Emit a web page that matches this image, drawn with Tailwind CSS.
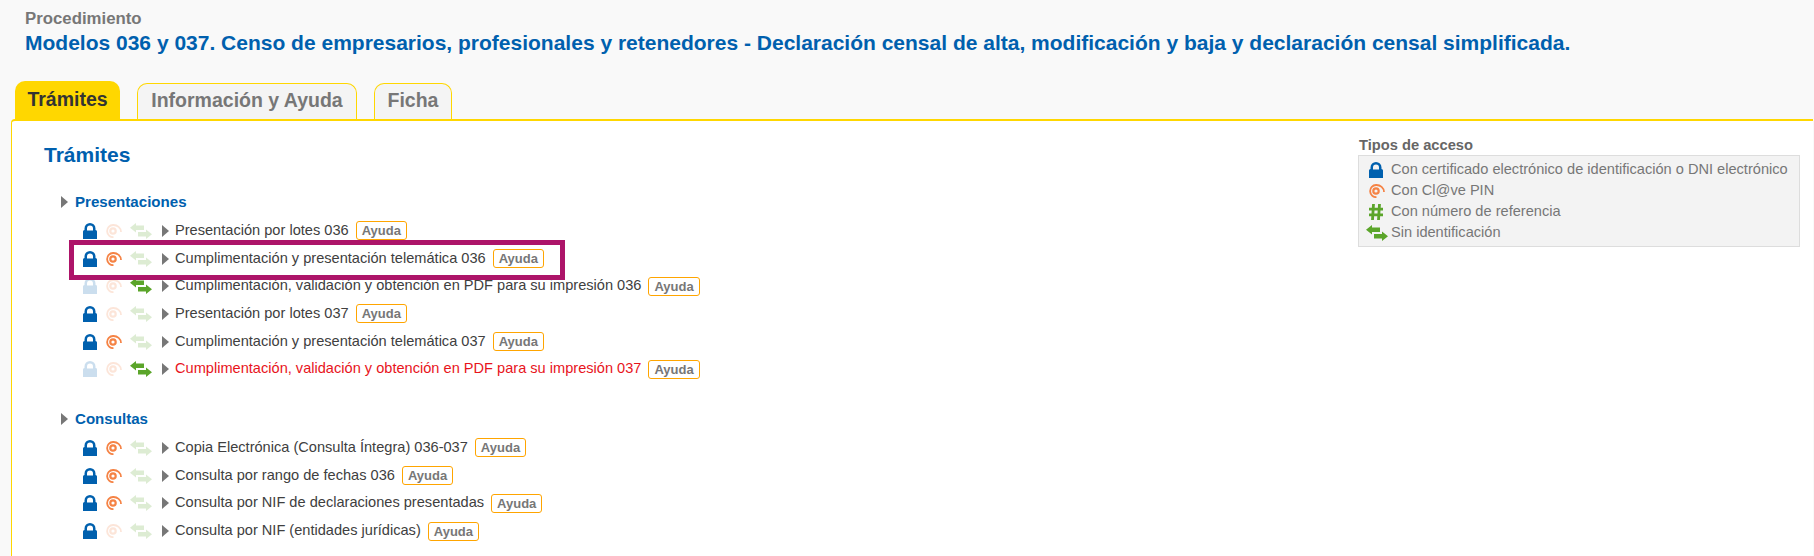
<!DOCTYPE html>
<html lang="es">
  <head>
    <meta charset="UTF-8" />
    <title>Procedimiento</title>
    <script src="https://cdn.jsdelivr.net/npm/@tailwindcss/browser@4"></script>
  </head>
  <body class="h-[556px] overflow-hidden bg-[#f9f9f9] font-['Liberation_Sans',Arial,sans-serif] text-[14.6px] text-[#404040]">
    <!-- icon defs -->
    <svg class="hidden">
      <symbol id="lock" viewBox="0 0 14 16">
        <path fill="#0060ae" fill-rule="evenodd" d="M1.500 7V5.500a5.500 5.500 0 0 1 11 0V7A1.500 1.500 0 0 1 14 8.500V16H0V8.500A1.500 1.500 0 0 1 1.500 7zM4 7.500h6V5.500a3 3 0 0 0-6 0v2z" />
      </symbol>
      <symbol id="clave" viewBox="0 0 17 14">
        <g fill="none" stroke="#f58345">
          <path stroke-width="1.800" d="M16 8A7.500 7 0 0 0 8 1 6.100 6.100 0 0 0 8.500 13.200" />
          <circle cx="8" cy="7" r="2.700" stroke-width="2.200" />
        </g>
      </symbol>
      <symbol id="arrows" viewBox="0 0 22 16">
        <path fill="#5ba52a" d="M0 4.750 6 0v2.500h8V7H6v2.500zM22 11.250 16 6.500V9H8v4.500h8V16z" />
      </symbol>
      <symbol id="hash" viewBox="0 0 14 16">
        <path fill="none" stroke="#5ba52a" stroke-width="2.800" d="M4.500 0 3.500 16M10.500 0 9.500 16M0 5.200h14M0 10.800h14" />
      </symbol>
    </svg>

    <header class="pt-[9px] pl-[25px]">
      <div class="text-[16.800px] leading-[20px] font-bold text-[#777]">Procedimiento</div>
      <h1 class="mt-[2px] text-[21px] leading-[24px] font-bold text-[#0060ae]">
        Modelos 036 y 037. Censo de empresarios, profesionales y retenedores - Declaración censal de alta, modificación y baja y declaración censal simplificada.
      </h1>
    </header>

    <nav class="mt-[26px] flex items-end gap-[17px] pl-[15px] text-[19.500px] font-bold">
      <a class="flex h-[38px] w-[105px] items-center justify-center rounded-t-[10px] bg-[#ffd700] text-[#333]">Trámites</a>
      <a class="flex h-[36px] w-[220px] items-center justify-center rounded-t-[10px] border border-b-0 border-[#ffd700] bg-[#f4f4f4] pb-[2px] text-[#777]">Información y Ayuda</a>
      <a class="flex h-[36px] w-[78px] items-center justify-center rounded-t-[10px] border border-b-0 border-[#ffd700] bg-[#f4f4f4] pb-[2px] text-[#777]">Ficha</a>
    </nav>

    <main class="relative mr-px ml-[11px] flex h-[437px] justify-between rounded-tl-[4px] border-t-2 border-l border-[#ffd700] bg-white pr-[13px] pl-[32px]">
      <div class="pt-[22px]">
        <h2 class="text-[21px] leading-[24px] font-bold text-[#0060ae]">Trámites</h2>

        <section class="mt-[25px] flex h-[20px] items-center">
          <span class="ml-[17px] h-0 w-0 border-y-[6px] border-l-[7px] border-y-transparent border-l-[#777]"></span>
          <h3 class="ml-[7px] text-[15.100px] font-bold text-[#0060ae]">Presentaciones</h3>
        </section>
        <ul class="mt-[5px]">
          <li class="flex h-[27.700px] items-center">
            <svg class="ml-[39px] h-[16px] w-[14px]"><use href="#lock" /></svg>
            <svg class="ml-[8px] h-[14px] w-[17px] opacity-20"><use href="#clave" /></svg>
            <svg class="ml-[8px] h-[16px] w-[22px] opacity-20"><use href="#arrows" /></svg>
            <span class="ml-[10px] h-0 w-0 border-y-[6px] border-l-[7px] border-y-transparent border-l-[#777]"></span>
            <span class="ml-[6px]">Presentación por lotes 036</span>
            <span class="ml-[7px] rounded-[3px] border border-[#ffa500] px-[5px] text-[13px] leading-[17px] font-bold text-[#777]">Ayuda</span>
          </li>
          <li class="flex h-[27.700px] items-center">
            <svg class="ml-[39px] h-[16px] w-[14px]"><use href="#lock" /></svg>
            <svg class="ml-[8px] h-[14px] w-[17px]"><use href="#clave" /></svg>
            <svg class="ml-[8px] h-[16px] w-[22px] opacity-20"><use href="#arrows" /></svg>
            <span class="ml-[10px] h-0 w-0 border-y-[6px] border-l-[7px] border-y-transparent border-l-[#777]"></span>
            <span class="ml-[6px]">Cumplimentación y presentación telemática 036</span>
            <span class="ml-[7px] rounded-[3px] border border-[#ffa500] px-[5px] text-[13px] leading-[17px] font-bold text-[#777]">Ayuda</span>
          </li>
          <li class="flex h-[27.700px] items-center">
            <svg class="ml-[39px] h-[16px] w-[14px] opacity-20"><use href="#lock" /></svg>
            <svg class="ml-[8px] h-[14px] w-[17px] opacity-20"><use href="#clave" /></svg>
            <svg class="ml-[8px] h-[16px] w-[22px]"><use href="#arrows" /></svg>
            <span class="ml-[10px] h-0 w-0 border-y-[6px] border-l-[7px] border-y-transparent border-l-[#777]"></span>
            <span class="ml-[6px]">Cumplimentación, validación y obtención en PDF para su impresión 036</span>
            <span class="ml-[7px] rounded-[3px] border border-[#ffa500] px-[5px] text-[13px] leading-[17px] font-bold text-[#777]">Ayuda</span>
          </li>
          <li class="flex h-[27.700px] items-center">
            <svg class="ml-[39px] h-[16px] w-[14px]"><use href="#lock" /></svg>
            <svg class="ml-[8px] h-[14px] w-[17px] opacity-20"><use href="#clave" /></svg>
            <svg class="ml-[8px] h-[16px] w-[22px] opacity-20"><use href="#arrows" /></svg>
            <span class="ml-[10px] h-0 w-0 border-y-[6px] border-l-[7px] border-y-transparent border-l-[#777]"></span>
            <span class="ml-[6px]">Presentación por lotes 037</span>
            <span class="ml-[7px] rounded-[3px] border border-[#ffa500] px-[5px] text-[13px] leading-[17px] font-bold text-[#777]">Ayuda</span>
          </li>
          <li class="flex h-[27.700px] items-center">
            <svg class="ml-[39px] h-[16px] w-[14px]"><use href="#lock" /></svg>
            <svg class="ml-[8px] h-[14px] w-[17px]"><use href="#clave" /></svg>
            <svg class="ml-[8px] h-[16px] w-[22px] opacity-20"><use href="#arrows" /></svg>
            <span class="ml-[10px] h-0 w-0 border-y-[6px] border-l-[7px] border-y-transparent border-l-[#777]"></span>
            <span class="ml-[6px]">Cumplimentación y presentación telemática 037</span>
            <span class="ml-[7px] rounded-[3px] border border-[#ffa500] px-[5px] text-[13px] leading-[17px] font-bold text-[#777]">Ayuda</span>
          </li>
          <li class="flex h-[27.700px] items-center">
            <svg class="ml-[39px] h-[16px] w-[14px] opacity-20"><use href="#lock" /></svg>
            <svg class="ml-[8px] h-[14px] w-[17px] opacity-20"><use href="#clave" /></svg>
            <svg class="ml-[8px] h-[16px] w-[22px]"><use href="#arrows" /></svg>
            <span class="ml-[10px] h-0 w-0 border-y-[6px] border-l-[7px] border-y-transparent border-l-[#777]"></span>
            <span class="ml-[6px] text-[#e8141c]">Cumplimentación, validación y obtención en PDF para su impresión 037</span>
            <span class="ml-[7px] rounded-[3px] border border-[#ffa500] px-[5px] text-[13px] leading-[17px] font-bold text-[#777]">Ayuda</span>
          </li>
        </ul>

        <section class="mt-[26px] flex h-[20px] items-center">
          <span class="ml-[17px] h-0 w-0 border-y-[6px] border-l-[7px] border-y-transparent border-l-[#777]"></span>
          <h3 class="ml-[7px] text-[15.100px] font-bold text-[#0060ae]">Consultas</h3>
        </section>
        <ul class="mt-[5px]">
          <li class="flex h-[27.700px] items-center">
            <svg class="ml-[39px] h-[16px] w-[14px]"><use href="#lock" /></svg>
            <svg class="ml-[8px] h-[14px] w-[17px]"><use href="#clave" /></svg>
            <svg class="ml-[8px] h-[16px] w-[22px] opacity-20"><use href="#arrows" /></svg>
            <span class="ml-[10px] h-0 w-0 border-y-[6px] border-l-[7px] border-y-transparent border-l-[#777]"></span>
            <span class="ml-[6px]">Copia Electrónica (Consulta Íntegra) 036-037</span>
            <span class="ml-[7px] rounded-[3px] border border-[#ffa500] px-[5px] text-[13px] leading-[17px] font-bold text-[#777]">Ayuda</span>
          </li>
          <li class="flex h-[27.700px] items-center">
            <svg class="ml-[39px] h-[16px] w-[14px]"><use href="#lock" /></svg>
            <svg class="ml-[8px] h-[14px] w-[17px]"><use href="#clave" /></svg>
            <svg class="ml-[8px] h-[16px] w-[22px] opacity-20"><use href="#arrows" /></svg>
            <span class="ml-[10px] h-0 w-0 border-y-[6px] border-l-[7px] border-y-transparent border-l-[#777]"></span>
            <span class="ml-[6px]">Consulta por rango de fechas 036</span>
            <span class="ml-[7px] rounded-[3px] border border-[#ffa500] px-[5px] text-[13px] leading-[17px] font-bold text-[#777]">Ayuda</span>
          </li>
          <li class="flex h-[27.700px] items-center">
            <svg class="ml-[39px] h-[16px] w-[14px]"><use href="#lock" /></svg>
            <svg class="ml-[8px] h-[14px] w-[17px]"><use href="#clave" /></svg>
            <svg class="ml-[8px] h-[16px] w-[22px] opacity-20"><use href="#arrows" /></svg>
            <span class="ml-[10px] h-0 w-0 border-y-[6px] border-l-[7px] border-y-transparent border-l-[#777]"></span>
            <span class="ml-[6px]">Consulta por NIF de declaraciones presentadas</span>
            <span class="ml-[7px] rounded-[3px] border border-[#ffa500] px-[5px] text-[13px] leading-[17px] font-bold text-[#777]">Ayuda</span>
          </li>
          <li class="flex h-[27.700px] items-center">
            <svg class="ml-[39px] h-[16px] w-[14px]"><use href="#lock" /></svg>
            <svg class="ml-[8px] h-[14px] w-[17px] opacity-20"><use href="#clave" /></svg>
            <svg class="ml-[8px] h-[16px] w-[22px] opacity-20"><use href="#arrows" /></svg>
            <span class="ml-[10px] h-0 w-0 border-y-[6px] border-l-[7px] border-y-transparent border-l-[#777]"></span>
            <span class="ml-[6px]">Consulta por NIF (entidades jurídicas)</span>
            <span class="ml-[7px] rounded-[3px] border border-[#ffa500] px-[5px] text-[13px] leading-[17px] font-bold text-[#777]">Ayuda</span>
          </li>
        </ul>
      </div>

      <aside class="w-[442px] pt-[15px] text-[#777]">
        <div class="pl-px text-[14.700px] leading-[18px] font-bold text-[#666]">Tipos de acceso</div>
        <ul class="mt-[1px] h-[92px] border border-[#ddd] bg-[#f3f3f3] px-[7px] py-[3px]">
          <li class="flex h-[21px] items-center">
            <svg class="ml-[3px] h-[16px] w-[14px]"><use href="#lock" /></svg>
            <span class="ml-[8px]">Con certificado electrónico de identificación o DNI electrónico</span>
          </li>
          <li class="flex h-[21px] items-center">
            <svg class="ml-[2px] h-[14px] w-[17px]"><use href="#clave" /></svg>
            <span class="ml-[6px]">Con Cl@ve PIN</span>
          </li>
          <li class="flex h-[21px] items-center">
            <svg class="ml-[3px] h-[16px] w-[14px]"><use href="#hash" /></svg>
            <span class="ml-[8px]">Con número de referencia</span>
          </li>
          <li class="flex h-[21px] items-center">
            <svg class="h-[16px] w-[22px]"><use href="#arrows" /></svg>
            <span class="ml-[3px]">Sin identificación</span>
          </li>
        </ul>
      </aside>

      <!-- highlight drawn over the row -->
      <div class="absolute top-[119px] left-[57px] h-[40px] w-[496px] border-[5px] border-[#ad1469]"></div>
    </main>
  </body>
</html>
